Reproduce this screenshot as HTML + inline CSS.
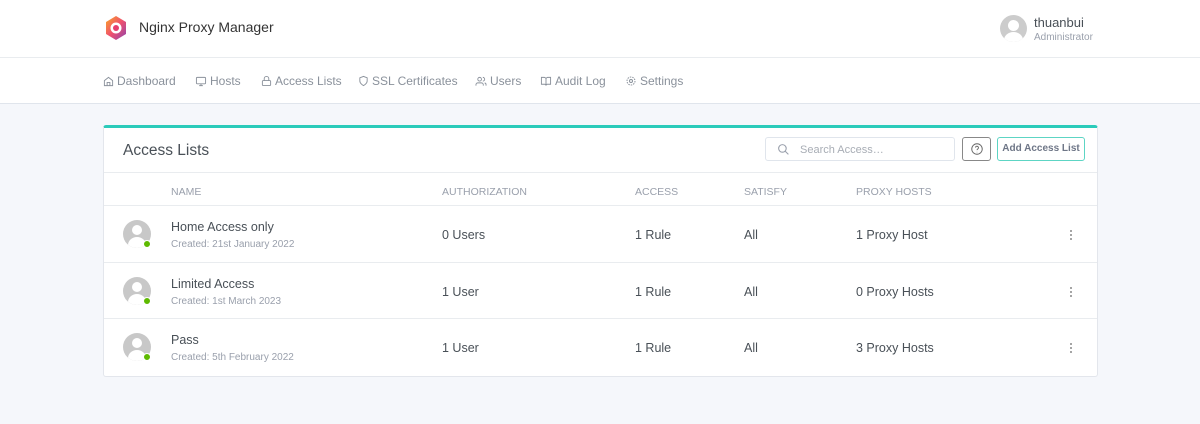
<!DOCTYPE html>
<html><head><meta charset="utf-8"><style>
*{box-sizing:border-box;margin:0;padding:0}
body{width:1200px;height:424px;background:#f5f7fb;font-family:"Liberation Sans",sans-serif;color:#495057;position:relative;overflow:hidden;font-size:13px}
.hdr{position:absolute;left:0;top:0;width:1200px;height:58px;background:#fff;border-bottom:1px solid #e9ecef}
.nav{position:absolute;left:0;top:58px;width:1200px;height:46px;background:#fff;border-bottom:1px solid #e0e5ec}
.abs{position:absolute;white-space:nowrap}
.navi{top:74px;font-size:12px;color:#8a919b}
.navi svg{vertical-align:-2px;margin-right:3px}
.card{position:absolute;left:103px;top:125px;width:995px;height:252px;background:#fff;border:1px solid #e3e6ec;border-top:3px solid #2bcbba;border-radius:3px}
.line{position:absolute;left:0;width:993px;height:1px;background:#e9ecef}
.th{font-size:10.5px;color:#9aa0ac;top:58px}
.av{position:absolute;left:19px;width:28px;height:28px;border-radius:50%;background:#c8c8c8;overflow:hidden}
.av:before{content:"";position:absolute;left:9px;top:5px;width:10px;height:10px;border-radius:50%;background:#fff}
.av:after{content:"";position:absolute;left:5px;top:17px;width:18px;height:16px;border-radius:50%;background:#fff}
.dot{position:absolute;width:8px;height:8px;border-radius:50%;background:#5eba00;border:1px solid #fff}
.nm{font-size:12.5px;color:#495057}
.sub{font-size:10px;color:#9aa0ac}
.td{font-size:12.5px;color:#495057}
.dots{position:absolute;left:966px;width:3px}
.dots i{display:block;width:2px;height:2px;background:#888;margin-bottom:2px;border-radius:1px}
</style></head><body>
<div class="hdr"></div>
<svg class="abs" style="left:104px;top:15px" width="24" height="26" viewBox="0 0 24 26"><defs><linearGradient id="g" x1="0" y1="0" x2="1" y2="1"><stop offset="0" stop-color="#f9a825"/><stop offset=".5" stop-color="#f0506e"/><stop offset="1" stop-color="#8e44ad"/></linearGradient></defs><polygon points="12,1 22,7 22,19 12,25 2,19 2,7" fill="url(#g)"/><circle cx="12" cy="13" r="5.5" fill="#fff"/><circle cx="12" cy="13" r="3" fill="#e63e6d"/></svg>
<div class="abs" style="left:139px;top:19px;font-size:14px;color:#333">Nginx Proxy Manager</div>
<div class="abs" style="left:1000px;top:15px;width:27px;height:27px;border-radius:50%;background:#ccc;overflow:hidden"><div style="position:absolute;left:8px;top:5px;width:11px;height:11px;border-radius:50%;background:#fff"></div><div style="position:absolute;left:4px;top:17px;width:19px;height:16px;border-radius:50%;background:#fff"></div></div>
<div class="abs" style="left:1034px;top:15px;font-size:13px;color:#495057">thuanbui</div>
<div class="abs" style="left:1034px;top:32px;font-size:10px;color:#9aa0ac">Administrator</div>
<div class="nav"></div>
<div class="abs navi" style="left:103px"><svg width="11" height="11" viewBox="0 0 24 24" fill="none" stroke="#8a919b" stroke-width="2"><path d="M3 10l9-7 9 7v11H3z"/><path d="M9 21v-7h6v7"/></svg>Dashboard</div>
<div class="abs navi" style="left:195px"><svg width="12" height="11" viewBox="0 0 24 24" fill="none" stroke="#8a919b" stroke-width="2"><rect x="2" y="3" width="20" height="14" rx="2"/><path d="M8 21h8M12 17v4"/></svg>Hosts</div>
<div class="abs navi" style="left:261px"><svg width="11" height="12" viewBox="0 0 24 24" fill="none" stroke="#8a919b" stroke-width="2"><rect x="3" y="11" width="18" height="11" rx="2"/><path d="M7 11V7a5 5 0 0110 0v4"/></svg>Access Lists</div>
<div class="abs navi" style="left:358px"><svg width="11" height="12" viewBox="0 0 24 24" fill="none" stroke="#8a919b" stroke-width="2"><path d="M12 22s8-4 8-10V5l-8-3-8 3v7c0 6 8 10 8 10z"/></svg>SSL Certificates</div>
<div class="abs navi" style="left:475px"><svg width="12" height="11" viewBox="0 0 24 24" fill="none" stroke="#8a919b" stroke-width="2"><circle cx="9" cy="7" r="4"/><path d="M1 21v-2a4 4 0 014-4h8a4 4 0 014 4v2M16 3a4 4 0 010 8M23 21v-2a4 4 0 00-3-4"/></svg>Users</div>
<div class="abs navi" style="left:540px"><svg width="12" height="11" viewBox="0 0 24 24" fill="none" stroke="#8a919b" stroke-width="2"><path d="M2 3h6a4 4 0 014 4v14a3 3 0 00-3-3H2zM22 3h-6a4 4 0 00-4 4v14a3 3 0 013-3h7z"/></svg>Audit Log</div>
<div class="abs navi" style="left:625px"><svg width="12" height="12" viewBox="0 0 24 24" fill="none" stroke="#8a919b" stroke-width="2"><circle cx="12" cy="12" r="3"/><circle cx="12" cy="12" r="8" stroke-dasharray="3 2"/></svg>Settings</div>

<div class="card">
<div class="abs" style="left:19px;top:14px;font-size:15.5px;color:#495057">Access Lists</div>
<div class="abs" style="left:661px;top:9px;width:190px;height:24px;border:1px solid #e0e5ec;border-radius:3px"><svg class="abs" style="left:11px;top:5px" width="13" height="13" viewBox="0 0 24 24" fill="none" stroke="#9aa0ac" stroke-width="2"><circle cx="10" cy="10" r="7"/><path d="M15 15l6 6"/></svg><span class="abs" style="left:34px;top:6px;font-size:11px;color:#a8adb5">Search Access…</span></div>
<div class="abs" style="left:858px;top:9px;width:29px;height:24px;border:1px solid #888;border-radius:3px"><svg class="abs" style="left:7px;top:4px" width="14" height="14" viewBox="0 0 24 24" fill="none" stroke="#666" stroke-width="1.6"><circle cx="12" cy="12" r="9"/><path d="M9.5 9.5a2.5 2.5 0 015 .5c0 2-2.5 2-2.5 4M12 17v.5"/></svg></div>
<div class="abs" style="left:893px;top:9px;width:88px;height:24px;border:1px solid #5dd5c4;border-radius:3px;font-size:10px;font-weight:bold;color:#6e7687;text-align:center;line-height:22px">Add Access List</div>
<div class="line" style="top:44px"></div>
<div class="abs th" style="left:67px">NAME</div>
<div class="abs th" style="left:338px">AUTHORIZATION</div>
<div class="abs th" style="left:531px">ACCESS</div>
<div class="abs th" style="left:640px">SATISFY</div>
<div class="abs th" style="left:752px">PROXY HOSTS</div>
<div class="line" style="top:77px"></div>

<div class="av" style="top:92px"></div><div class="dot" style="left:39px;top:112px"></div>
<div class="abs nm" style="left:67px;top:92px">Home Access only</div>
<div class="abs sub" style="left:67px;top:111px">Created: 21st January 2022</div>
<div class="abs td" style="left:338px;top:100px">0 Users</div><div class="abs td" style="left:531px;top:100px">1 Rule</div><div class="abs td" style="left:640px;top:100px">All</div><div class="abs td" style="left:752px;top:100px">1 Proxy Host</div>
<div class="dots" style="top:102px"><i></i><i></i><i></i></div>
<div class="line" style="top:134px"></div>

<div class="av" style="top:149px"></div><div class="dot" style="left:39px;top:169px"></div>
<div class="abs nm" style="left:67px;top:149px">Limited Access</div>
<div class="abs sub" style="left:67px;top:168px">Created: 1st March 2023</div>
<div class="abs td" style="left:338px;top:157px">1 User</div><div class="abs td" style="left:531px;top:157px">1 Rule</div><div class="abs td" style="left:640px;top:157px">All</div><div class="abs td" style="left:752px;top:157px">0 Proxy Hosts</div>
<div class="dots" style="top:159px"><i></i><i></i><i></i></div>
<div class="line" style="top:190px"></div>

<div class="av" style="top:205px"></div><div class="dot" style="left:39px;top:225px"></div>
<div class="abs nm" style="left:67px;top:205px">Pass</div>
<div class="abs sub" style="left:67px;top:224px">Created: 5th February 2022</div>
<div class="abs td" style="left:338px;top:213px">1 User</div><div class="abs td" style="left:531px;top:213px">1 Rule</div><div class="abs td" style="left:640px;top:213px">All</div><div class="abs td" style="left:752px;top:213px">3 Proxy Hosts</div>
<div class="dots" style="top:215px"><i></i><i></i><i></i></div>
</div>
</body></html>
